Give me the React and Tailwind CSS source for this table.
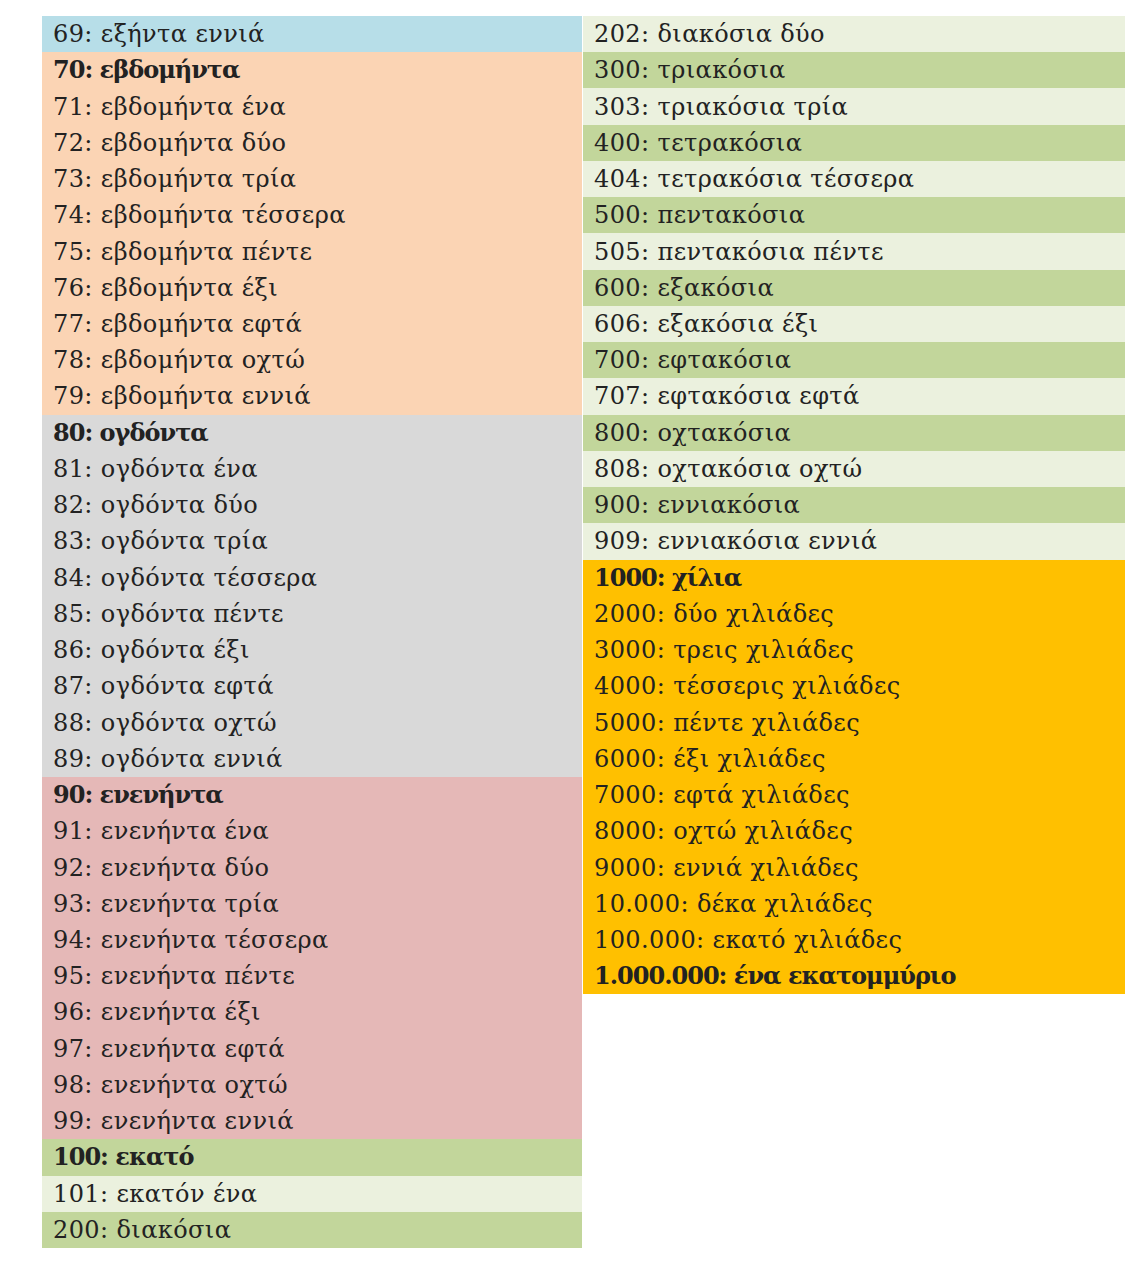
// Greek numbers table — two columns of coloured rows.

const left = [
  ['69: εξήντα εννιά', 'bg-[#b7dee8]'],
  ['70: εβδομήντα', 'bg-[#fbd4b4]', true],
  ['71: εβδομήντα ένα', 'bg-[#fbd4b4]'],
  ['72: εβδομήντα δύο', 'bg-[#fbd4b4]'],
  ['73: εβδομήντα τρία', 'bg-[#fbd4b4]'],
  ['74: εβδομήντα τέσσερα', 'bg-[#fbd4b4]'],
  ['75: εβδομήντα πέντε', 'bg-[#fbd4b4]'],
  ['76: εβδομήντα έξι', 'bg-[#fbd4b4]'],
  ['77: εβδομήντα εφτά', 'bg-[#fbd4b4]'],
  ['78: εβδομήντα οχτώ', 'bg-[#fbd4b4]'],
  ['79: εβδομήντα εννιά', 'bg-[#fbd4b4]'],
  ['80: ογδόντα', 'bg-[#d9d9d9]', true],
  ['81: ογδόντα ένα', 'bg-[#d9d9d9]'],
  ['82: ογδόντα δύο', 'bg-[#d9d9d9]'],
  ['83: ογδόντα τρία', 'bg-[#d9d9d9]'],
  ['84: ογδόντα τέσσερα', 'bg-[#d9d9d9]'],
  ['85: ογδόντα πέντε', 'bg-[#d9d9d9]'],
  ['86: ογδόντα έξι', 'bg-[#d9d9d9]'],
  ['87: ογδόντα εφτά', 'bg-[#d9d9d9]'],
  ['88: ογδόντα οχτώ', 'bg-[#d9d9d9]'],
  ['89: ογδόντα εννιά', 'bg-[#d9d9d9]'],
  ['90: ενενήντα', 'bg-[#e5b8b7]', true],
  ['91: ενενήντα ένα', 'bg-[#e5b8b7]'],
  ['92: ενενήντα δύο', 'bg-[#e5b8b7]'],
  ['93: ενενήντα τρία', 'bg-[#e5b8b7]'],
  ['94: ενενήντα τέσσερα', 'bg-[#e5b8b7]'],
  ['95: ενενήντα πέντε', 'bg-[#e5b8b7]'],
  ['96: ενενήντα έξι', 'bg-[#e5b8b7]'],
  ['97: ενενήντα εφτά', 'bg-[#e5b8b7]'],
  ['98: ενενήντα οχτώ', 'bg-[#e5b8b7]'],
  ['99: ενενήντα εννιά', 'bg-[#e5b8b7]'],
  ['100: εκατό', 'bg-[#c2d69b]', true],
  ['101: εκατόν ένα', 'bg-[#ebf1de]'],
  ['200: διακόσια', 'bg-[#c2d69b]'],
]

const G = 'bg-[#c2d69b]'
const L = 'bg-[#ebf1de]'
const O = 'bg-[#ffc000]'

const right = [
  ['202: διακόσια δύο', L],
  ['300: τριακόσια', G],
  ['303: τριακόσια τρία', L],
  ['400: τετρακόσια', G],
  ['404: τετρακόσια τέσσερα', L],
  ['500: πεντακόσια', G],
  ['505: πεντακόσια πέντε', L],
  ['600: εξακόσια', G],
  ['606: εξακόσια έξι', L],
  ['700: εφτακόσια', G],
  ['707: εφτακόσια εφτά', L],
  ['800: οχτακόσια', G],
  ['808: οχτακόσια οχτώ', L],
  ['900: εννιακόσια', G],
  ['909: εννιακόσια εννιά', L],
  ['1000: χίλια', O, true],
  ['2000: δύο χιλιάδες', O],
  ['3000: τρεις χιλιάδες', O],
  ['4000: τέσσερις χιλιάδες', O],
  ['5000: πέντε χιλιάδες', O],
  ['6000: έξι χιλιάδες', O],
  ['7000: εφτά χιλιάδες', O],
  ['8000: οχτώ χιλιάδες', O],
  ['9000: εννιά χιλιάδες', O],
  ['10.000: δέκα χιλιάδες', O],
  ['100.000: εκατό χιλιάδες', O],
  ['1.000.000: ένα εκατομμύριο', O, true],
]

function Row({ text, bg, bold }) {
  return (
    <div className={`h-[36.24px] flex items-center pl-[11px] ${bg} ${bold ? 'font-bold tracking-[-1px]' : 'tracking-[0.4px]'}`}>
      {text}
    </div>
  )
}

function Column({ rows, width }) {
  return (
    <div className={`flex flex-col ${width}`}>
      {rows.map(([t, bg, b], i) => <Row key={i} text={t} bg={bg} bold={b} />)}
    </div>
  )
}

export default function App() {
  return (
    <div className="w-[1140px] h-[1270px] bg-white pt-[16px] pl-[42px] text-[24px] leading-none text-[#222]"
      style={{ fontFamily: '"DejaVu Serif", "Liberation Serif", serif' }}>
      <div className="flex items-start gap-[1px]">
        <Column rows={left} width="w-[540px]" />
        <Column rows={right} width="w-[542px]" />
      </div>
    </div>
  )
}
